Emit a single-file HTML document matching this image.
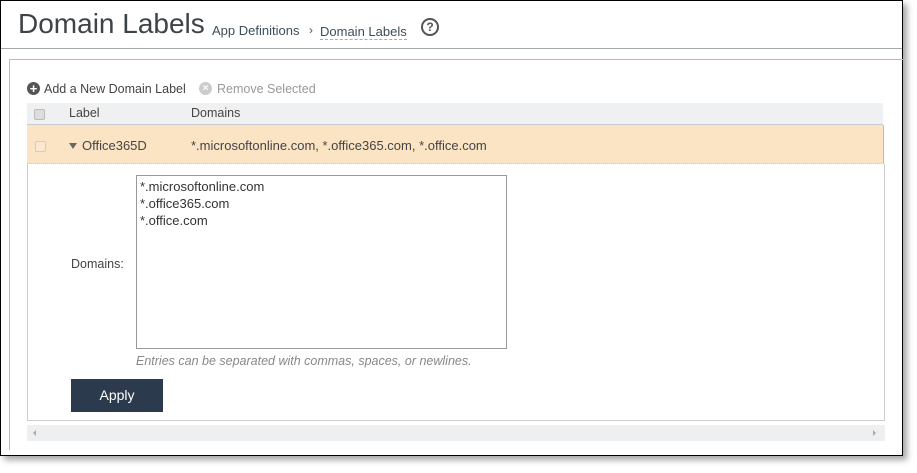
<!DOCTYPE html>
<html><head><style>
body{margin:0;width:917px;height:473px;background:#fff;font-family:"Liberation Sans",sans-serif;position:relative;overflow:hidden}
.frame{position:absolute;left:0;top:0;width:902px;height:455px;border:1px solid #000;border-top:none;border-left:none;box-shadow:4px 4px 6px rgba(0,0,0,.35);background:#fff}
.abs{position:absolute}
</style></head><body>
<div class="frame"></div>
<div class="abs" style="left:0;top:0;width:1px;height:456px;background:#000"></div>
<div class="abs" style="left:0;top:0;width:903px;height:1px;background:#000"></div>
<div class="abs" style="left:18px;top:8px;font-size:28px;color:#3d4448">Domain Labels</div>
<div class="abs" style="left:212px;top:23px;font-size:13px;color:#3d4e5a">App Definitions</div>
<div class="abs" style="left:309px;top:23px;font-size:12px;color:#555">›</div>
<div class="abs" style="left:320px;top:24px;font-size:13px;color:#3d4e5a;border-bottom:1px dashed #aaa">Domain Labels</div>
<div class="abs" style="left:421px;top:18px;width:14px;height:14px;border:2px solid #555;border-radius:50%;font-size:12px;font-weight:bold;text-align:center;line-height:14px;color:#555">?</div>
<div class="abs" style="left:1px;top:48px;width:901px;height:1px;background:#a3aaa8"></div>
<div class="abs" style="left:9px;top:59px;width:893px;height:390px;border-top:1px solid #bbb;border-left:1px solid #bbb"></div>
<div class="abs" style="left:27px;top:82px;width:13px;height:13px;border-radius:50%;background:#555;color:#fff;font-size:13px;line-height:13px;text-align:center;font-weight:bold">+</div>
<div class="abs" style="left:44px;top:82px;font-size:12.5px;color:#444">Add a New Domain Label</div>
<div class="abs" style="left:199px;top:82px;width:13px;height:13px;border-radius:50%;background:#ccc;color:#fff;font-size:10px;line-height:13px;text-align:center;font-weight:bold">×</div>
<div class="abs" style="left:217px;top:82px;font-size:12.5px;color:#999">Remove Selected</div>
<div class="abs" style="left:27px;top:103px;width:856px;height:21px;background:#eef0f1;border-bottom:1px solid #c5cbcf"></div>
<div class="abs" style="left:34px;top:109px;width:9px;height:9px;border:1px solid #bbb;border-radius:2px;background:#ddd"></div>
<div class="abs" style="left:69px;top:106px;font-size:12.5px;color:#444">Label</div>
<div class="abs" style="left:191px;top:106px;font-size:12.5px;color:#444">Domains</div>
<div class="abs" style="left:27px;top:125px;width:856px;height:38px;background:#fbe4c4;border-right:1px solid #bbb;border-bottom:1px dotted #ccc"></div>
<div class="abs" style="left:35px;top:141px;width:9px;height:9px;border:1px solid #ccc;border-radius:2px;background:#fbe8d0"></div>
<div class="abs" style="left:69px;top:143px;width:0;height:0;border-left:4px solid transparent;border-right:4px solid transparent;border-top:6px solid #666"></div>
<div class="abs" style="left:82px;top:138px;font-size:13px;color:#444">Office365D</div>
<div class="abs" style="left:191px;top:138px;font-size:13px;color:#444">*.microsoftonline.com, *.office365.com, *.office.com</div>
<div class="abs" style="left:27px;top:164px;width:856px;height:256px;border-left:1px solid #ccc;border-right:1px solid #ccc;border-bottom:1px solid #ccc"></div>
<div class="abs" style="left:71px;top:257px;font-size:12.5px;color:#444">Domains:</div>
<div class="abs" style="left:136px;top:175px;width:369px;height:172px;border:1px solid #999"></div>
<div class="abs" style="left:140px;top:178px;font-size:13px;color:#333;line-height:17px">*.microsoftonline.com<br>*.office365.com<br>*.office.com</div>
<div class="abs" style="left:136px;top:354px;font-size:12.5px;font-style:italic;color:#888">Entries can be separated with commas, spaces, or newlines.</div>
<div class="abs" style="left:71px;top:379px;width:92px;height:33px;background:#2b3a4d;color:#fff;font-size:14px;line-height:33px;text-align:center">Apply</div>
<div class="abs" style="left:27px;top:425px;width:858px;height:16px;background:#eeeff0"></div>
<div class="abs" style="left:33px;top:430px;width:0;height:0;border-top:3px solid transparent;border-bottom:3px solid transparent;border-right:3px solid #aaa"></div>
<div class="abs" style="left:873px;top:430px;width:0;height:0;border-top:3px solid transparent;border-bottom:3px solid transparent;border-left:3px solid #aaa"></div>
</body></html>
